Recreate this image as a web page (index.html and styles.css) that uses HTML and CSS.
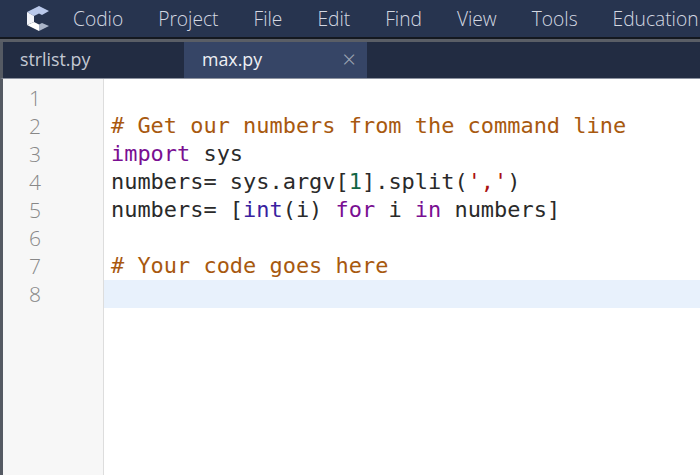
FILE: index.html
```html
<!DOCTYPE html>
<html lang="en">
<head>
<meta charset="utf-8">
<title>Codio</title>
<link rel="stylesheet" href="styles.css">
</head>
<body>
<div class="app">
  <header class="menubar">
    <svg class="logo" width="24" height="26" viewBox="0 0 24 26">
      <polygon points="0,6 12,0 22,5 15,9 12,7.5 7,10" fill="#b9c8ea"/>
      <polygon points="0,6 7,10 7,16 0,19" fill="#f2f4fa"/>
      <polygon points="0,19 7,16 12,18.5 12,25" fill="#ffffff"/>
      <polygon points="12,18.5 15,17 22,20 12,25" fill="#aab4c8"/>
    </svg>
    <nav class="menu">
      <span class="item">Codio</span>
      <span class="item">Project</span>
      <span class="item">File</span>
      <span class="item">Edit</span>
      <span class="item">Find</span>
      <span class="item">View</span>
      <span class="item">Tools</span>
      <span class="item">Education</span>
    </nav>
  </header>
  <div class="divider"></div>
  <div class="tabs">
    <div class="tab">strlist.py</div>
    <div class="tab active"><span>max.py</span><span class="close">×</span></div>
  </div>
  <main class="editor">
    <div class="gutter">
      <div class="num">1</div><div class="num">2</div><div class="num">3</div><div class="num">4</div>
      <div class="num">5</div><div class="num">6</div><div class="num">7</div><div class="num">8</div>
    </div>
    <div class="code">
      <div class="line"></div>
      <div class="line cm"># Get our numbers from the command line</div>
      <div class="line"><span class="kw">import</span> sys</div>
      <div class="line">numbers= sys.argv[<span class="n">1</span>].split(<span class="s">','</span>)</div>
      <div class="line">numbers= [<span class="bi">int</span>(i) <span class="kw">for</span> i <span class="kw">in</span> numbers]</div>
      <div class="line"></div>
      <div class="line cm"># Your code goes here</div>
      <div class="line current"></div>
    </div>
  </main>
</div>
</body>
</html>
```
FILE: styles.css
```css
* { box-sizing: border-box; }
html, body { margin: 0; height: 100%; overflow: hidden; }
.app { width: 700px; height: 475px; display: flex; flex-direction: column; background: #fff; }
.menubar {
  height: 37px; flex: none; background: #27344f; display: flex; align-items: center;
  padding-left: 27px; overflow: hidden; white-space: nowrap;
}
.logo { flex: none; margin-right: 22px; }
.menu { display: flex; gap: 35px; font: 300 19.2px "Open Sans", sans-serif; color: #d4d8e2; }
.divider { height: 5px; flex: none; background: linear-gradient(#14181f 0 2px, #5a5e66 2px); }
.tabs { height: 37px; flex: none; display: flex; background: #222c42; border-left: 3px solid #555a63; border-bottom: 1px solid #8d93a0; font: 17.8px "Open Sans", sans-serif; }
.tab { width: 181px; padding-left: 17px; line-height: 34px; color: #c4c9d4; }
.tab.active { width: 183px; background: #364566; color: #eef0f5; padding: 0 11px 0 18px; display: flex; justify-content: space-between; }
.close { color: #9ea4b2; font-size: 24px; font-weight: 300; }
.editor { flex: 1; display: flex; border-left: 3px solid #555a63; min-height: 0; }
.gutter { flex: none; width: 101px; background: #f7f7f7; border-right: 1px solid #ddd; padding-top: 5px; }
.num { height: 28px; text-align: right; padding-right: 62px; font: 300 21px/28px "Open Sans", sans-serif; color: #888; }
.code { flex: 1; padding-top: 5px; font: 21.95px/28px "DejaVu Sans Mono", monospace; color: #2a2a2a; }
.line { height: 28px; padding-left: 7px; white-space: pre; }
.current { background: #e8f1fc; }
.cm { color: #a8590f; }
.kw { color: #7a0f92; }
.bi { color: #3a1fa0; }
.n { color: #116644; }
.s { color: #aa1111; }
```
